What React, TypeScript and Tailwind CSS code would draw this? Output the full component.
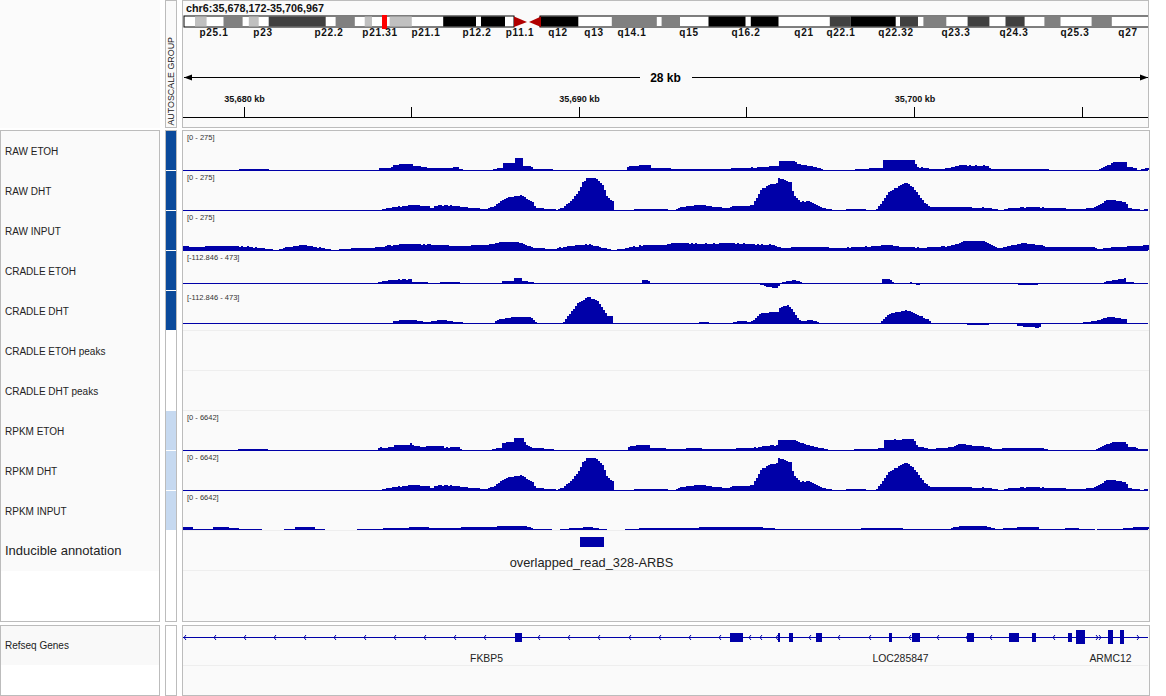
type Pt = [number, number]

const BLUE = '#0000a8'

const rawEtoh: Pt[] = [
  [239, 1], [267, 1], [268, 0], [377, 0], [378, 2], [390, 2], [393, 5], [407, 6], [412, 6], [413, 4], [425, 3], [427, 2], [452, 2], [453, 3], [457, 3], [458, 1], [461, 1], [462, 0], [491, 0], [492, 1], [501, 2], [502, 7], [514, 7], [515, 12], [522, 12], [523, 4], [532, 3], [533, 1], [552, 1], [553, 0], [626, 0], [627, 3], [640, 5], [649, 5], [650, 2], [670, 1.5], [678, 1], [710, 1], [717, 1], [745, 2], [760, 3], [777, 4], [778, 9], [793, 9], [797, 6], [815, 3], [823, 0], [854, 0], [855, 1], [881, 2], [883, 10], [913, 10], [917, 3], [932, 1], [940, 1], [953, 3], [958, 5], [987, 4], [990, 1], [1047, 1], [1048, 0], [1097, 0], [1107, 5], [1115, 8], [1125, 8], [1127, 3], [1135, 2], [1137, 0], [1142, 1], [1148, 2],
]

const rawDht: Pt[] = [
  [382, 1], [393, 3], [410, 5], [427, 4], [430, 2], [438, 5], [457, 4], [472, 2], [485, 1], [493, 3], [500, 9], [507, 12], [513, 13], [520, 15], [532, 8], [535, 2], [552, 1], [557, 0], [565, 4], [577, 17], [582, 28], [587, 32], [595, 32], [602, 25], [607, 12], [612, 9], [613, 0], [632, 0], [633, 1], [660, 1], [673, 0], [680, 3], [690, 4], [702, 5], [712, 3], [728, 2], [733, 4], [743, 4], [752, 5], [760, 20], [767, 25], [777, 27], [778, 32], [790, 28], [793, 15], [800, 8], [808, 9], [822, 2], [835, 0], [855, 1], [875, 0], [880, 6], [888, 18], [905, 28], [913, 22], [923, 8], [930, 3], [957, 3], [988, 2], [1000, 0], [1010, 2], [1030, 3], [1053, 2], [1077, 1], [1093, 2], [1107, 10], [1125, 8], [1128, 2], [1142, 0], [1148, 2],
]

const rawInput: Pt[] = [
  [183, 4], [200, 3], [212, 4], [243, 3.5], [260, 2], [275, 0], [288, 3], [303, 5], [327, 1], [333, 0], [357, 2], [373, 2], [393, 5], [410, 6], [460, 4], [487, 5], [500, 8], [517, 8], [533, 2], [553, 1], [563, 3], [585, 6], [603, 2], [613, 0], [627, 2], [643, 5], [660, 5], [677, 7], [710, 6], [727, 7], [772, 5], [782, 2], [797, 3], [827, 3], [828, 2], [860, 3], [887, 5], [920, 2], [950, 4], [963, 9], [983, 9], [997, 2], [1023, 7], [1050, 3], [1093, 3], [1097, 1], [1127, 4], [1142, 4], [1148, 6],
]

const cradleEtoh: Pt[] = [
  [302, -1], [310, -1], [311, 0], [377, 0], [378, 1], [392, 3], [410, 4], [411, 1], [427, 1], [428, 0], [452, 1], [458, 1], [459, 0], [501, 0], [502, 2], [512, 2], [513, 5], [520, 5], [522, 2], [532, 1], [533, 0], [594, 0], [595, -1], [600, -1], [601, 0], [641, 0], [642, 3], [645, 3], [649, 2], [650, 0], [701, 0], [702, -1], [708, -1], [713, -1], [717, -1], [718, 0], [757, 0], [758, -1], [767, -4], [775, -5], [778, -3], [780, 0], [787, 2], [792, 3], [800, 1], [801, 0], [881, 0], [882, 4], [889, 4], [892, 1], [894, 0], [909, 0], [910, 1], [913, -1], [917, -2], [923, -1], [924, 0], [1016, 0], [1017, -2], [1037, -2], [1038, 0], [1046, 0], [1047, -1], [1057, -1], [1058, 0], [1084, 0], [1085, -1], [1095, -1], [1096, 0], [1102, 0], [1103, 1], [1115, 3], [1125, 5], [1126, 1], [1132, 1], [1133, 0],
]

const cradleDht: Pt[] = [
  [391, 0], [392, 2], [410, 3], [427, 1], [437, 3], [457, 1], [462, 1], [463, 0], [494, 0], [495, 2], [500, 4], [513, 6], [530, 6], [535, 1], [536, 0], [562, 0], [563, 1], [568, 8], [577, 20], [587, 26], [597, 22], [607, 7], [612, 6], [613, 0], [669, 0], [670, -1], [677, -1], [678, 0], [697, 0], [698, 1], [702, 1], [707, 1], [708, 0], [731, 0], [732, 1], [740, 2], [750, 1], [760, 10], [777, 11], [778, 15], [788, 18], [795, 8], [800, 2], [810, 3], [820, 0], [879, 0], [880, 1], [888, 9], [905, 13], [917, 8], [928, 3], [930, 0], [966, 0], [967, -2], [988, -2], [989, 0], [1016, 0], [1017, -3], [1030, -4], [1037, -5], [1040, -3], [1041, 0], [1059, 0], [1060, -1], [1078, -1], [1079, 0], [1095, 2], [1108, 6], [1125, 4], [1126, 0], [1141, 0], [1142, -1], [1143, 0],
]

const rpkmEtoh: Pt[] = [
  [238, 1], [267, 1], [268, 0], [377, 0], [378, 2], [392, 3], [393, 5], [408, 5], [410, 7], [413, 4], [425, 3], [427, 4], [442, 4], [443, 2], [453, 3], [458, 3], [460, 1], [463, 0], [491, 0], [492, 1], [500, 2], [502, 7], [513, 8], [514, 12], [522, 12], [525, 5], [535, 2], [552, 1], [553, 0], [626, 0], [627, 3], [640, 5], [649, 5], [650, 2], [660, 2], [670, 1], [678, 1], [693, 2], [710, 1], [733, 1], [737, 2], [753, 2], [763, 4], [777, 5], [778, 10], [793, 10], [803, 6], [815, 3], [825, 1], [827, 0], [852, 0], [853, 1], [872, 1], [882, 2], [883, 10], [913, 11], [917, 3], [930, 1], [940, 2], [953, 3], [958, 6], [970, 5], [988, 3], [992, 1], [1010, 2], [1023, 2], [1042, 2], [1048, 0], [1093, 0], [1103, 4], [1107, 6], [1115, 8], [1125, 8], [1127, 3], [1135, 3], [1137, 1], [1148, 1],
]

const rpkmInput: Pt[] = [
  [183, 2], [192, 2], [193, 0], [211, 0], [212, 1.5], [227, 1.5], [228, 0], [230, 1], [237, 1], [238, 0], [294, 0], [295, 1.5], [313, 1.5], [314, 0], [381, 0], [382, 1], [408, 1], [410, 2], [415, 2], [420, 2], [427, 2], [428, 1], [492, 2], [500, 3], [520, 3], [530, 2], [532, 0], [567, 0], [568, 1], [580, 1], [585, 2], [598, 1], [599, 0], [637, 0], [638, 1], [660, 1], [736, 2], [750, 2], [773, 1], [774, 0], [859, 0], [860, 1], [902, 1], [903, 0], [949, 0], [950, 1], [962, 3], [983, 3], [993, 1], [994, 0], [1002, 0], [1003, 1], [1015, 1], [1017, 2], [1038, 2], [1039, 0], [1064, 0], [1065, 1], [1077, 1], [1078, 0], [1121, 0], [1122, 1], [1142, 2], [1148, 2],
]

// step shape out of the control points, 2px columns like the IGV bars
function barPath(points: Pt[], base: number, rough: boolean) {
  let d = ''
  let seg = 0
  for (let x = points[0][0]; x < points[points.length - 1][0]; x += 2) {
    while (seg < points.length - 2 && x >= points[seg + 1][0]) seg++
    const [x0, h0] = points[seg]
    const [x1, h1] = points[seg + 1]
    const h = h0 + ((h1 - h0) * (x - x0)) / (x1 - x0)
    const n = Math.sin(x * 12.9898) * 43758.5453
    const jitter = rough && Math.abs(h) > 2 ? (n - Math.floor(n) - 0.5) * 0.9 : 0
    const v = Math.round(h + jitter)
    if (v !== 0) d += `M${x} ${base}V${base - v}h2V${base}z`
  }
  return d
}

const tracks = [
  { name: 'RAW ETOH', range: '[0 - 275]', data: rawEtoh, base: 39, attr: 'bg-[#0b4a9b]' },
  { name: 'RAW DHT', range: '[0 - 275]', data: rawDht, base: 39, attr: 'bg-[#0b4a9b]' },
  { name: 'RAW INPUT', range: '[0 - 275]', data: rawInput, base: 39, attr: 'bg-[#0b4a9b]' },
  { name: 'CRADLE ETOH', range: '[-112.846 - 473]', data: cradleEtoh, base: 32, attr: 'bg-[#0b4a9b]' },
  { name: 'CRADLE DHT', range: '[-112.846 - 473]', data: cradleDht, base: 32, attr: 'bg-[#0b4a9b]', line: true },
  { name: 'CRADLE ETOH peaks', attr: 'bg-white', line: true },
  { name: 'CRADLE DHT peaks', attr: 'bg-white', line: true },
  { name: 'RPKM ETOH', range: '[0 - 6642]', data: rpkmEtoh, base: 39, attr: 'bg-[#c6d9f0]' },
  { name: 'RPKM DHT', range: '[0 - 6642]', data: rawDht, base: 39, attr: 'bg-[#c6d9f0]' },
  { name: 'RPKM INPUT', range: '[0 - 6642]', data: rpkmInput, base: 38, attr: 'bg-[#c6d9f0]', line: true, gaps: [[262, 284], [325, 357], [552, 560], [607, 625], [1095, 1097]] },
]

const pBands: [number, number, string][] = [
  [195, 206.6, '#c0c0c0'], [223.5, 242.6, '#808080'], [248.8, 258.7, '#c0c0c0'], [268.7, 325.7, '#404040'], [335.6, 354.8, '#808080'], [364.7, 372, '#c0c0c0'], [389.6, 411.8, '#c0c0c0'], [443.2, 476, '#000'], [481, 505, '#000'],
]
const qBands: [number, number, string][] = [
  [539.6, 578.3, '#000'], [611.8, 656.8, '#808080'], [661.6, 680, '#808080'], [708.5, 745.5, '#000'], [750.8, 778.5, '#000'], [829.8, 850.8, '#404040'], [850.8, 895.7, '#000'], [900, 918, '#404040'], [923.4, 946.3, '#808080'], [967.6, 989.4, '#404040'], [1005.5, 1024.6, '#404040'], [1044.4, 1060.5, '#808080'], [1091.6, 1111.8, '#808080'],
]
const bandLabels: [string, number][] = [
  ['p25.1', 214], ['p23', 263], ['p22.2', 329], ['p21.31', 380], ['p21.1', 426], ['p12.2', 477], ['p11.1', 520], ['q12', 558], ['q13', 594], ['q14.1', 632], ['q15', 689], ['q16.2', 746], ['q21', 804], ['q22.1', 841], ['q22.32', 896], ['q23.3', 956], ['q24.3', 1014], ['q25.3', 1075], ['q27', 1128],
]

const ticks = [244, 411, 579, 746, 914, 1082]
const tickLabels: [string, number][] = [['35,680 kb', 244.5], ['35,690 kb', 579.5], ['35,700 kb', 915]]

const leftChevrons = [184, 214, 244, 274, 304, 334, 364, 394, 424, 454, 484, 538, 568, 598, 629, 659, 689, 719, 749, 760, 776, 809, 838, 869, 909, 937, 966, 990, 1053]
const exons: [number, number, boolean?][] = [
  [515, 522], [730, 743], [778, 780], [789, 793], [816, 822], [889, 892], [912, 920], [967, 974], [1009, 1019], [1032, 1036], [1068, 1072], [1076, 1085, true], [1108, 1113, true], [1120, 1124, true],
]

function Chart({ track }: { track: (typeof tracks)[number] }) {
  if (!track.data) return null
  const base = track.base ?? 39
  const gaps = track.gaps ?? []
  const edges = [183, ...gaps.flat(), 1148]
  return (
    <svg viewBox="183 0 965 40" width={965} height={40} className="block overflow-visible" shapeRendering="crispEdges">
      <path d={barPath(track.data, base, track.data !== rpkmInput)} fill={BLUE} />
      {edges.map((x, i) =>
        i % 2 === 0 && i < edges.length - 1 ? (
          <rect key={x} x={x} y={base} width={edges[i + 1] - x} height={1} fill={BLUE} />
        ) : null,
      )}
    </svg>
  )
}

function Ideogram() {
  return (
    <svg viewBox="183 15 965 23" width={965} height={23} className="block">
      <rect x={184} y={16} width={330} height={11} fill="#fff" stroke="#000" />
      <rect x={540} y={16} width={609} height={11} fill="#fff" stroke="#000" />
      {[...pBands, ...qBands].map(([a, b, fill]) => (
        <rect key={a} x={a} y={16.5} width={b - a} height={10} fill={fill} />
      ))}
      <polygon points="514,16.5 527,22 514,27" fill="#b00000" />
      <polygon points="541,16.5 529,22 541,27" fill="#b00000" />
      <rect x={382} y={15} width={5} height={14} fill="#ff0000" />
      {bandLabels.map(([label, x]) => (
        <text key={label} x={x} y={36} textAnchor="middle" className="text-[10px] font-bold tracking-[0.7px]" fill="#111">
          {label}
        </text>
      ))}
    </svg>
  )
}

function Ruler() {
  return (
    <svg viewBox="183 70 965 50" width={965} height={50} className="block" shapeRendering="crispEdges">
      <rect x={184} y={77} width={964} height={1} fill="#000" />
      <g shapeRendering="auto">
        <polygon points="184,77.5 192,74.5 192,80.5" fill="#000" />
        <polygon points="1148,77.5 1140,74.5 1140,80.5" fill="#000" />
      </g>
      <rect x={640} y={72} width={52} height={12} fill="#fafafa" />
      <g shapeRendering="auto">
        <text x={665.5} y={82} textAnchor="middle" className="text-[12px] font-bold">28 kb</text>
        {tickLabels.map(([label, x]) => (
          <text key={label} x={x} y={102} textAnchor="middle" className="text-[9px] font-bold" fill="#111">
            {label}
          </text>
        ))}
      </g>
      {ticks.map((x) => (
        <rect key={x} x={x} y={107} width={1} height={10} fill="#000" />
      ))}
      <rect x={183} y={117} width={965} height={1} fill="#000" />
    </svg>
  )
}

function GeneTrack() {
  return (
    <svg viewBox="183 626 965 39" width={965} height={39} className="block border-b border-[#eeeeee] box-content">
      <rect x={183} y={637} width={965} height={1} fill={BLUE} />
      {leftChevrons.map((x) => (
        <path key={x} d={`M${x + 2} 635L${x} 637.5L${x + 2} 640`} fill="none" stroke={BLUE} />
      ))}
      <path d="M1096 635L1098 637.5L1096 640M1099 635L1101 637.5L1099 640M1137 635L1139 637.5L1137 640" fill="none" stroke={BLUE} />
      {exons.map(([a, b, tall]) => (
        <rect key={a} x={a} y={tall ? 630 : 633} width={b - a} height={tall ? 14 : 9} fill={BLUE} />
      ))}
      <text x={486.5} y={662} textAnchor="middle" className="text-[10.4px]" fill="#222">FKBP5</text>
      <text x={900.5} y={662} textAnchor="middle" className="text-[10.4px]" fill="#222">LOC285847</text>
      <text x={1110.5} y={662} textAnchor="middle" className="text-[10.4px]" fill="#222">ARMC12</text>
    </svg>
  )
}

export default function App() {
  return (
    <div className="w-[1166px] h-[696px] bg-white overflow-hidden flex flex-col font-['Liberation_Sans',Arial,sans-serif] text-[#222]">
      <div className="h-[128px] flex shrink-0">
        <div className="w-[160px] bg-[#fbfbfb]" />
        <div className="ml-[5px] w-[12px] border border-[#bcbcbc] bg-[#fafafa] flex flex-col justify-end items-center pb-[1px] overflow-hidden">
          <span className="[writing-mode:vertical-rl] rotate-180 text-[8.9px] leading-none whitespace-nowrap">AUTOSCALE GROUP</span>
        </div>
        <div className="ml-[5px] w-[967px] border border-[#bcbcbc] bg-[#fafafa] overflow-hidden">
          <div className="h-[14px] pl-[3px] text-[10.8px] leading-[14px] font-bold text-[#111]">chr6:35,678,172-35,706,967</div>
          <Ideogram />
          <div className="h-[32px]" />
          <Ruler />
        </div>
      </div>

      <div className="mt-[2px] h-[492px] flex shrink-0">
        <div className="w-[160px] border border-[#bcbcbc] flex flex-col">
          {tracks.map((t) => (
            <div key={t.name} className="h-10 shrink-0 bg-[#fafafa] flex items-center pl-[4px] text-[10px]">{t.name}</div>
          ))}
          <div className="h-10 shrink-0 bg-[#fafafa] flex items-center pl-[4px] text-[13px]">Inducible annotation</div>
        </div>
        <div className="ml-[5px] w-[12px] border border-[#bcbcbc] flex flex-col">
          {tracks.map((t) => (
            <div key={t.name} className={`h-10 shrink-0 border-b border-white ${t.attr}`} />
          ))}
        </div>
        <div className="ml-[5px] w-[968px] border border-[#bcbcbc] bg-[#fafafa] overflow-hidden flex flex-col">
          {tracks.map((t) => (
            <div key={t.name} className={`relative h-10 shrink-0 ${t.line ? 'border-b border-[#eeeeee]' : ''}`}>
              <Chart track={t} />
              {t.range && <span className="absolute left-[4px] top-[2px] text-[7.5px] leading-[10px] text-[#333]">{t.range}</span>}
            </div>
          ))}
          <div className="h-10 shrink-0 border-b border-[#eeeeee]">
            <svg viewBox="183 531 965 39" width={965} height={39} className="block">
              <rect x={580} y={537} width={24} height={10} fill={BLUE} />
              <text x={591.5} y={567} textAnchor="middle" className="text-[12.8px]" fill="#222">overlapped_read_328-ARBS</text>
            </svg>
          </div>
        </div>
      </div>

      <div className="mt-[3px] h-[71px] flex shrink-0">
        <div className="w-[160px] border border-[#bcbcbc]">
          <div className="h-[39px] bg-[#f9f9f9] flex items-center pl-[4px] text-[10px]">Refseq Genes</div>
        </div>
        <div className="ml-[5px] w-[12px] border border-[#bcbcbc]" />
        <div className="ml-[5px] w-[968px] border border-[#bcbcbc] bg-[#fafafa] overflow-hidden">
          <GeneTrack />
        </div>
      </div>
    </div>
  )
}
